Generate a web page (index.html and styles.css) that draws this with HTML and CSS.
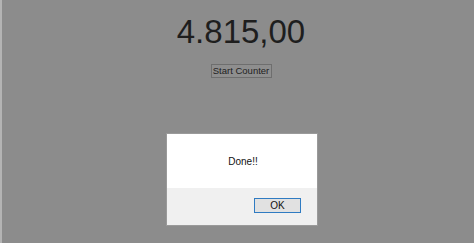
FILE: index.html
```html
<!DOCTYPE html>
<html>
<head>
<meta charset="utf-8">
<link rel="stylesheet" href="styles.css">
</head>
<body>
<div class="edge"></div>
<main class="page">
  <div class="counter">4.815,00</div>
  <button class="start">Start Counter</button>
</main>
<div class="dialog">
  <div class="msg">Done!!</div>
  <div class="footer"><button class="ok">OK</button></div>
</div>
</body>
</html>
```
FILE: styles.css
```css
html, body {
  margin: 0;
  padding: 0;
  width: 474px;
  height: 243px;
  overflow: hidden;
  background: #8c8c8c;
  font-family: "Liberation Sans", Arial, sans-serif;
}
.edge {
  position: absolute;
  left: 0;
  top: 0;
  width: 2px;
  height: 243px;
  background: #b4b4b4;
}
.page {
  display: flex;
  flex-direction: column;
  align-items: center;
  padding-left: 8px;
  padding-top: 13px;
}
.counter {
  font-size: 33px;
  line-height: 38px;
  color: #1e1e1e;
  letter-spacing: 0;
}
.start {
  margin-top: 13px;
  width: 61px;
  height: 14px;
  padding: 0;
  white-space: nowrap;
  font-family: "Liberation Sans", Arial, sans-serif;
  font-size: 9.5px;
  line-height: 12px;
  color: #222;
  background: #8e8e8e;
  border: 1px solid #6e6e6e;
  border-radius: 0;
}
.dialog {
  position: absolute;
  left: 166px;
  top: 133px;
  width: 150px;
  height: 91px;
  background: #fff;
  border: 1px solid #9a9a9a;
  display: flex;
  flex-direction: column;
}
.msg {
  height: 54px;
  display: flex;
  align-items: center;
  justify-content: center;
  font-size: 10px;
  color: #111;
  padding-left: 2px;
}
.footer {
  flex: 1;
  background: #f0f0f0;
  display: flex;
  justify-content: flex-end;
  align-items: flex-start;
  padding-top: 10px;
  padding-right: 16px;
}
.ok {
  width: 47px;
  height: 15px;
  padding: 0;
  font-family: "Liberation Sans", Arial, sans-serif;
  font-size: 10px;
  line-height: 12px;
  color: #111;
  background: #e1e1e1;
  border: 1px solid #2f7bc2;
  border-radius: 0;
}
```
